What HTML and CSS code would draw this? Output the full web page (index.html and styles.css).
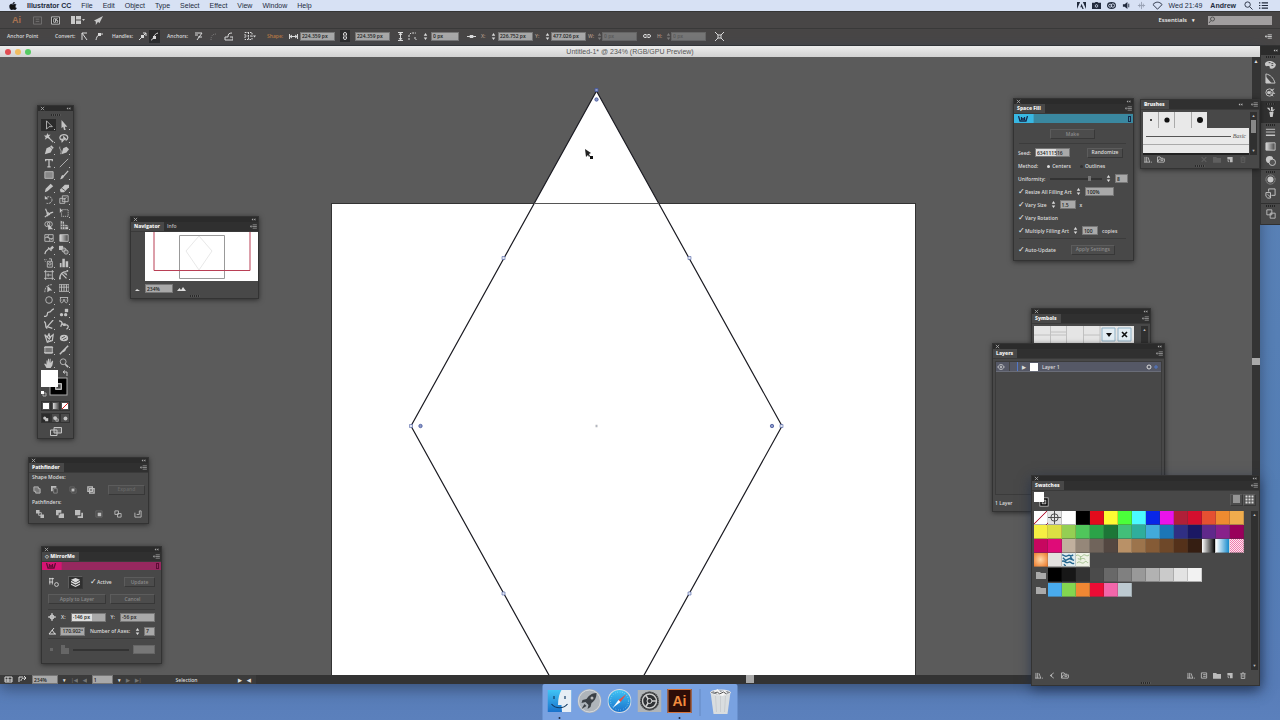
FILE: index.html
```html
<!DOCTYPE html>
<html lang="en">
<head>
<meta charset="utf-8">
<title>Untitled-1* @ 234% (RGB/GPU Preview)</title>
<link rel="stylesheet" href="styles.css">
</head>
<body>
<svg class="defs" aria-hidden="true">
  <symbol id="close" viewBox="0 0 6 6"><path d="M1 1l4 4M5 1L1 5"/></symbol>
  <symbol id="collapse" viewBox="0 0 8 6"><path class="solid" d="M3.500 1v4L1 3zM7 1v4L4.500 3z"/></symbol>
  <symbol id="flyout" viewBox="0 0 8 6"><path d="M3 1h5M3 3h5M3 5h5M0 2.500h2.500L1.200 4z"/></symbol>
  <symbol id="spin" viewBox="0 0 5 8"><path class="solid" d="M.5 3l2-3 2 3zM.5 5l2 3 2-3z"/></symbol>
  <symbol id="link" viewBox="0 0 8 8"><path d="M2.500 3.500V2a1.500 1.500 0 0 1 3 0v1.500M2.500 4.500V6a1.500 1.500 0 0 0 3 0V4.500M4 2.500v3"/></symbol>
  <symbol id="folder" viewBox="0 0 10 8"><path class="solid" d="M0 1h4l1 1h5v6H0z"/></symbol>
  <symbol id="crown" viewBox="0 0 10 6"><path stroke-width="1.300" d="M.5 0L2 5h6L9.500 0M3.500 1v3M6.500 1v3M5 2v2"/></symbol>
  <symbol id="library" viewBox="0 0 9 8"><path d="M1 1v6M3 1v6M4.500 1.500L6.500 7M0 7h7M8 7h1"/></symbol>
  <symbol id="openlib" viewBox="0 0 9 8"><path d="M.5 7V1h3l1 1.500H7M.5 7l2-3.500H9L8 7zM4 5h3"/></symbol>
  <symbol id="newitem" viewBox="0 0 8 8"><path class="solid" d="M1 1h6v6H4V4H1z"/><path d="M1 5.500h1.500V7"/></symbol>
  <symbol id="trashcan" viewBox="0 0 8 8"><path d="M1 2h6M3 1h2M2 2v5.500h4V2M4 3v3"/></symbol>
</svg>

<header class="menubar">
  <svg class="i8" viewBox="0 0 16 16"><path fill="#111" d="M11 0c0 2-1.500 4-3.500 4C7.500 2 9 .5 11 0zM8 5c1 0 2-1 3.500-1 1.300 0 2.500.7 3 1.700-2.800 1.700-2.300 5.300.5 6.300-.8 2-2 4-3.500 4-1.200 0-1.700-.8-3.200-.8S6 16 5 16c-2.600-.3-6-8-2.500-11C4.500 3.300 6 5 8 5z"/></svg>
  <nav class="menus"><b>Illustrator CC</b><span>File</span><span>Edit</span><span>Object</span><span>Type</span><span>Select</span><span>Effect</span><span>View</span><span>Window</span><span>Help</span></nav>
  <div class="menu-extras">
    <svg class="i9" viewBox="0 0 10 10"><path class="solid" d="M0 1h3.500L0 9zM10 1H6.500L10 9zM5 3l2.500 6H6L5.300 7H3.700z"/></svg>
    <svg class="i9" viewBox="0 0 10 10"><path class="solid" d="M0 2h3l1-1h2l1 1h3v7H0z"/><circle cx="5" cy="5.500" r="2.300" fill="#d7e0f2"/><circle cx="5" cy="5.500" r="1" class="solid"/></svg>
    <svg class="i9" viewBox="0 0 10 10"><ellipse cx="5" cy="5" rx="5" ry="3.800" class="solid"/><circle cx="3.500" cy="5.200" r="1.700" stroke="#d7e0f2"/><circle cx="6.500" cy="5" r="1.900" stroke="#d7e0f2"/></svg>
    <svg class="i9" viewBox="0 0 10 10"><path class="solid" d="M1 3.500h2L6 1v8L3 6.500H1z"/><path d="M7.500 3v4"/></svg>
    <svg class="i9 dim" viewBox="0 0 10 10"><path d="M1 5h8M5 1v8M3 3v4M7 3v4"/></svg>
    <svg class="i11" viewBox="0 0 12 10"><path d="M1 4c3-3.500 7-3.500 10 0L6 9z"/></svg>
    <span>Wed 21:49</span><b>Andrew</b>
    <svg class="i9" viewBox="0 0 10 10"><circle cx="4" cy="4" r="3"/><path d="M6.300 6.300L9.500 9.500"/></svg>
    <svg class="i9" viewBox="0 0 10 10"><path stroke-width="1.300" d="M0 2h1.500M3 2h7M0 5h1.500M3 5h7M0 8h1.500M3 8h7"/></svg>
  </div>
</header>

<div class="appbar">
  <span class="ai-mark">Ai</span>
  <button class="flat dim" aria-label="Bridge"><svg class="i9" viewBox="0 0 10 10"><path d="M.5 1h9v8h-9zM3 3.500h4M3 6h4"/></svg></button>
  <button class="flat" aria-label="Stock"><svg class="i9" viewBox="0 0 10 10"><path d="M.5 1h9v8h-9z" fill="#282828"/><path d="M3 3v4M3 3h2v4H3M7.500 3H6v2h1.500v2H6"/></svg></button>
  <button class="flat wide" aria-label="Arrange documents"><svg class="i14" viewBox="0 0 14 10"><path class="solid" d="M0 1h4v8H0zM5 1h5v3.500H5zM5 5.500h5V9H5zM11 4h3l-1.500 2z"/></svg></button>
  <button class="flat" aria-label="GPU performance"><svg class="i9" viewBox="0 0 10 10"><path class="solid" d="M10 0L6 8 4.500 6.500 2 10V6L0 5l4-2z"/></svg></button>
  <div class="workspace"><button class="flat strong">Essentials <span class="mini">▾</span></button><div class="search"><svg class="i8" viewBox="0 0 8 8"><circle cx="4.500" cy="3" r="2"/><path d="M3 4.500L1 7"/></svg><input type="search" aria-label="Search"></div></div>
</div>

<div class="controlbar">
  <div class="controls">
    <span>Anchor Point</span><span>Convert:</span>
    <svg class="i9" viewBox="0 0 9 9"><path d="M2 1l5 7M2 8V1h5"/></svg>
    <svg class="i9" viewBox="0 0 9 9"><path d="M1 8C2 3 4 2 8 2"/><path class="solid" d="M3 1h3v3H3z"/></svg>
    <span>Handles:</span>
    <svg class="i9" viewBox="0 0 9 9"><path d="M1 8L8 1M5 1h3v3"/><path class="solid" d="M3 3h3v3H3z"/></svg>
    <span class="pressed"><svg class="i9" viewBox="0 0 9 9"><path d="M1 8c3 0 2-6 7-7"/><path class="solid" d="M3 4h3v3H3z"/></svg></span>
    <span>Anchors:</span>
    <svg class="i9" viewBox="0 0 9 9"><path d="M1 1h7L3 8M1 3h3M4 5h4"/></svg>
    <svg class="i9 dim" viewBox="0 0 9 9"><path stroke-dasharray="1 1" d="M2 8c0-5 2-6 6-6"/></svg>
    <svg class="i9" viewBox="0 0 9 9"><path d="M1 8V5h3c0-3 1-4 4-4M6 5h3v3H1"/></svg>
    <svg class="i12" viewBox="0 0 12 9"><path stroke-dasharray="1.500 1" d="M1 1h7v7H1zM4.500 1v7M1 4.500h7"/><path class="solid" d="M9 4h3l-1.500 2z"/></svg>
    <span class="orange">Shape:</span>
    <svg class="i9" viewBox="0 0 9 9"><path d="M.5 2v5M8.500 2v5M1 4.500h7M3 3L1 4.500 3 6M6 3l2 1.500L6 6"/></svg>
    <input aria-label="Shape width" value="224.359 px">
    <span class="pressed"><svg class="i8"><use href="#link"/></svg></span>
    <input aria-label="Shape height" value="224.359 px">
    <svg class="i9" viewBox="0 0 9 9"><path d="M2 .5h5M2 8.500h5M4.500 1v7M3 3l1.500-2L6 3M3 6l1.500 2L6 6"/></svg>
    <svg class="i9" viewBox="0 0 9 9"><path stroke-dasharray="2 1" d="M1 8V3l2-2h5M6 6h2v2"/></svg>
    <svg class="sp"><use href="#spin"/></svg>
    <input class="short" aria-label="Corner radius" value="0 px">
    <svg class="i9" viewBox="0 0 9 9"><path d="M0 4.500h9M3 3.500h3v2H3z"/></svg>
    <label for="cx" class="tan">X:</label><svg class="sp"><use href="#spin"/></svg><input id="cx" value="226.752 px">
    <label for="cy" class="tan">Y:</label><svg class="sp"><use href="#spin"/></svg><input id="cy" value="477.026 px">
    <label for="cw" class="tan">W:</label><svg class="sp dim"><use href="#spin"/></svg><input id="cw" disabled value="0 px">
    <svg class="i8 turn"><use href="#link"/></svg>
    <label for="ch" class="tan">H:</label><svg class="sp dim"><use href="#spin"/></svg><input id="ch" disabled value="0 px">
    <svg class="i9" viewBox="0 0 9 9"><path d="M0 0l3 3M9 0L6 3M0 9l3-3M9 9L6 6M3 3h3v3H3z"/></svg>
  </div>
  <svg class="fly"><use href="#flyout"/></svg>
</div>

<main class="work">
  <section class="window">
    <div class="titlebar"><div class="lights"><i></i><i></i><i></i></div><span>Untitled-1* @ 234% (RGB/GPU Preview)</span></div>
    <div class="middle">
      <div class="canvas">
        <svg class="art">
          <rect x="331.500" y="146.500" width="584" height="1200" fill="#fff" stroke="#333"/>
          <path d="M596.500 34L782 369 596.500 704 411 369z" fill="#fff" stroke="#1b1b22" stroke-width="1.200"/>
          <path d="M534 146.500h125" stroke="#555"/>
          <g fill="#dfe3f0" stroke="#5264a8" stroke-width=".6"><path d="M502 199.500h3v3h-3zM688 199.500h3v3h-3zM409.500 367.500h3v3h-3zM780 367.500h3v3h-3zM502 535h3v3h-3zM688 535h3v3h-3z"/></g>
          <g fill="#8d9ac8" stroke="#44559c" stroke-width=".8"><path d="M595 31.500h3v3h-3z"/><circle cx="596.500" cy="42.500" r="1.700"/><circle cx="420.500" cy="369" r="1.700"/><circle cx="772" cy="369" r="1.700"/></g>
          <path d="M595.500 368h2v2h-2z" fill="#8791ac"/>
          <path d="M585 92l1 8 2-2 1 2 1-1-1-2 2-1z" fill="#222" stroke="none"/><path d="M590 99h3v3h-3z" fill="#111" stroke="none"/>
        </svg>
      </div>
      <div class="vscroll"><span>▲</span><i></i></div>
    </div>
    <div class="status">
      <svg class="i9" viewBox="0 0 9 9"><path d="M1 2h7v5H1zM1 5h7M4 2v5"/></svg>
      <svg class="i9" viewBox="0 0 9 9"><path d="M1 7V2h4M3 6c0-2 1-3 5-3M6 1l2 2-2 2"/></svg>
      <input class="zoombox" aria-label="Zoom" value="234%"><span class="mini">▾</span>
      <span class="mini dim">|◀</span><span class="mini dim">◀</span>
      <input class="pagebox" aria-label="Artboard" value="1"><span class="mini">▾</span>
      <span class="mini dim">▶</span><span class="mini dim">▶|</span>
      <span class="mode">Selection</span><span class="mini">▶</span><span class="mini">◀</span>
      <div class="hscroll"><i></i></div>
    </div>
  </section>
  <aside class="side">
    <div class="side-top"><svg class="x6"><use href="#collapse"/></svg></div>
    <div class="side-group">
      <svg class="i11" viewBox="0 0 12 12"><path class="solid" d="M0 5c1-4 9-4 12 1-1 5-5 5-7 4 1-2-1-3-3-2C0 8 0 6 0 5z"/><path d="M4 4h2M7 5h2M7 7h2" stroke="#444"/></svg>
      <svg class="i11" viewBox="0 0 12 12"><path d="M1 1c5 1 8 4 10 10H1z"/><path class="solid" d="M1 4l6 7H1z"/></svg>
      <svg class="i11" viewBox="0 0 12 12"><circle cx="5" cy="6" r="4"/><path d="M4 6l6-4M4 6l7 1M4 6l5 4"/><circle cx="4" cy="6" r="1.700" class="solid"/></svg>
    </div>
    <div class="side-group one on"><svg class="i12" viewBox="0 0 12 12"><path class="solid" d="M4 6h5l-1 6H5zM1 1h3l2 5zM6 0h2v5H6zM11 2L8 6l-1-2z"/></svg></div>
    <div class="side-group">
      <svg class="i11" viewBox="0 0 12 12"><path d="M1 2.500h10M1 5.500h10" /><path stroke-width="1.600" d="M1 9h10"/></svg>
      <svg class="i11" viewBox="0 0 12 12"><path d="M1 2h10v8H1z" fill="url(#fade)"/></svg>
      <svg class="i11" viewBox="0 0 12 12"><circle cx="5" cy="5" r="4" class="solid"/><circle cx="8" cy="8" r="3.500" fill="#555"/></svg>
    </div>
    <div class="side-group two">
      <svg class="i11" viewBox="0 0 12 12"><circle cx="6" cy="6" r="3.300" class="solid"/><circle cx="6" cy="6" r="5" stroke-dasharray="1 1.200"/></svg>
      <svg class="i11" viewBox="0 0 12 12"><path d="M4 4V1h7v7H7M1 5h5v6H3L1 9zM3 7l3 3"/></svg>
    </div>
    <div class="side-group one"><svg class="i12" viewBox="0 0 12 12"><path d="M1 1h6v6H1zM5 5h6v6H5z" fill="#484848"/></svg></div>
  </aside>
</main>

<svg class="defs"><linearGradient id="fade"><stop stop-color="#ddd"/><stop offset="1" stop-color="#444"/></linearGradient>
<linearGradient id="glass" x2="0" y2="1"><stop stop-color="#40c4f5"/><stop offset="1" stop-color="#1972cc"/></linearGradient></svg>

<section class="panel tools" aria-label="Tools">
  <div class="bar"><svg class="x6"><use href="#close"/></svg><svg class="x6"><use href="#collapse"/></svg></div>
  <div class="grip"></div>
  <div class="toolgrid">
    <button class="on" aria-label="Selection"><svg viewBox="0 0 12 12"><path d="M3 1l7 7H6l-3 3z"/></svg></button>
    <button aria-label="Direct selection"><svg viewBox="0 0 12 12"><path class="solid" d="M3 0l7 8H7l1 4H6L5 8l-2 2z"/></svg></button>
    <button aria-label="Magic wand"><svg viewBox="0 0 12 12"><path stroke-width="1.500" d="M5 5l6 6"/><path class="solid" d="M4 0l1 2 3 0-2 2 1 3-3-1-3 2 1-3-2-2h3z"/></svg></button>
    <button aria-label="Lasso"><svg viewBox="0 0 12 12"><path stroke-width="1.500" d="M4 9C-1 7 1 2 6 2s6 5 2 7M3 7c1 0 3 2 0 4"/><path class="solid" d="M5 3l5 5H7l-2 2z"/></svg></button>
    <button aria-label="Pen"><svg viewBox="0 0 12 12"><path class="solid" d="M1 11l2-7 4-2 3 3-2 4z"/><path stroke-width="2" d="M8 1l3 3"/></svg></button>
    <button aria-label="Curvature"><svg viewBox="0 0 12 12"><path class="solid" d="M3 11l2-7 4-2 3 3-3 4z"/><path d="M1 2c-1 4 3 3 1 9"/></svg></button>
    <button aria-label="Type"><svg viewBox="0 0 12 12"><path stroke-width="1.500" d="M2 4V2h8v2M6 2v8M4 10.500h4"/></svg></button>
    <button aria-label="Line"><svg viewBox="0 0 12 12"><path d="M1 11L11 1"/></svg></button>
    <button aria-label="Rectangle"><svg viewBox="0 0 12 12"><path d="M1 2h10v8H1z" fill="#888"/></svg></button>
    <button aria-label="Paintbrush"><svg viewBox="0 0 12 12"><path stroke-width="1.500" d="M11 1L5 8"/><path class="solid" d="M6 7c0 3-2 4-5 4 2-1 1-4 3-5z"/></svg></button>
    <button aria-label="Pencil"><svg viewBox="0 0 12 12"><path class="solid" d="M1 11l1-4 6-6 3 3-7 6z"/></svg></button>
    <button aria-label="Eraser"><svg viewBox="0 0 12 12"><path class="solid" d="M1 8l6-6h5v3l-6 6H2z"/><path stroke="#444" d="M3 6l4 3"/></svg></button>
    <button aria-label="Rotate"><svg viewBox="0 0 12 12"><path stroke-dasharray="3 1" d="M3 3c5-3 8 2 6 5-2 3-6 2-6 2"/><path class="solid" d="M1 1v4h4z"/></svg></button>
    <button aria-label="Scale"><svg viewBox="0 0 12 12"><path d="M4 1h7v7H4zM1 4h6v6H1zM5 6l4-3"/></svg></button>
    <button aria-label="Width"><svg viewBox="0 0 12 12"><path stroke-width="1.500" d="M2 1c0 3 4 4 2 9M1 11c3-3 5-5 10-6M3 5l3 3 3-3"/><circle cx="5" cy="7" r="1.500"/></svg></button>
    <button aria-label="Free transform"><svg viewBox="0 0 12 12"><path stroke-dasharray="1.500 1" d="M4 2h7v8H3V5"/><path class="solid" d="M1 0l4 4H3L1 6z"/></svg></button>
    <button aria-label="Shape builder"><svg viewBox="0 0 12 12"><circle cx="4" cy="5" r="3"/><circle cx="7" cy="5" r="3"/><path class="solid" d="M5 5l6 6H7l-2 1z"/></svg></button>
    <button aria-label="Perspective grid"><svg viewBox="0 0 12 12"><path class="solid" d="M2 1l4 1v3l5 2v4H2z"/><path stroke="#555" d="M4 1v10M7 4v7M2 5h8M2 8h9"/></svg></button>
    <button aria-label="Mesh"><svg viewBox="0 0 12 12"><path d="M1 2h10v8H1zM1 6c4-3 6 3 10 0M6 2c-3 3 3 5 0 8M3 4l2 1M8 8l2-1"/></svg></button>
    <button aria-label="Gradient"><svg viewBox="0 0 12 12"><path d="M1 2h10v8H1z" fill="url(#fade)"/></svg></button>
    <button aria-label="Eyedropper"><svg viewBox="0 0 12 12"><path stroke-width="1.500" d="M1 11l1-3 4-4M5 3l4 4"/><path class="solid" d="M7 4l3-3 2 2-3 3z"/></svg></button>
    <button aria-label="Blend"><svg viewBox="0 0 12 12"><path class="solid" d="M0 1h5v5H0z"/><circle cx="6" cy="6" r="2.500" fill="#777"/><circle cx="8.500" cy="8.500" r="2.500" fill="#666"/></svg></button>
    <button aria-label="Symbol sprayer"><svg viewBox="0 0 12 12"><path d="M4 4h6v7H4zM6 1h3v3"/><path stroke-dasharray="1 1" d="M0 2h4M1 4h2"/><circle cx="7" cy="7" r="1.500"/></svg></button>
    <button aria-label="Graph"><svg viewBox="0 0 12 12"><path class="solid" d="M1 6h2v5H1zM4 1h3v10H4zM8 4h3v7H8z"/></svg></button>
    <button aria-label="Artboard"><svg viewBox="0 0 12 12"><path d="M2 0v12M10 0v12M0 2h12M0 10h12M5 4v4M3 6h6"/></svg></button>
    <button aria-label="Live corners"><svg viewBox="0 0 12 12"><path stroke-width="1.500" d="M1 11c0-6 3-9 8-9M4 5l5 5"/><path class="solid" d="M5 4h4l1 3zM0 9h2v2H0zM9 0h2v2H9z"/></svg></button>
    <button aria-label="Path segment"><svg viewBox="0 0 12 12"><path stroke-dasharray="2 1" d="M1 11c0-6 3-9 9-9"/><path class="solid" d="M4 3l6 6H7l-3 2z"/></svg></button>
    <button aria-label="Grid"><svg viewBox="0 0 12 12"><path d="M0 2h12v8H0zM0 5h12M3 2v8M6 2v8M9 2v8"/></svg></button>
    <button aria-label="Ellipse"><svg viewBox="0 0 12 12"><circle cx="6" cy="6" r="4"/></svg></button>
    <button aria-label="Spiral"><svg viewBox="0 0 12 12"><path d="M1 3h10M2 3c-2 8 3 8 4 2 1 6 6 6 4-2M3 6h1M8 6h1"/></svg></button>
    <button aria-label="Smooth"><svg viewBox="0 0 12 12"><path stroke-width="1.500" d="M0 10h2c4-1 0-5 4-5 3 0 2-3 6-4"/></svg></button>
    <button aria-label="Scatter"><svg viewBox="0 0 12 12"><circle class="solid" cx="3" cy="8" r="2"/><circle class="solid" cx="8" cy="8" r="2"/><path class="solid" d="M7 1h4v4H7z"/></svg></button>
    <button aria-label="Knife"><svg viewBox="0 0 12 12"><path stroke-width="1.500" d="M0 2c4 1 0 7 4 8M11 0L4 8l6 2"/></svg></button>
    <button aria-label="Reshape"><svg viewBox="0 0 12 12"><path stroke-width="1.500" d="M0 1c6 0 2 6 7 5s5 3 2 5M4 3L2 8"/><path class="solid" d="M5 4h3v3H5z"/></svg></button>
    <button aria-label="Crystallize"><svg viewBox="0 0 12 12"><path stroke-width="1.500" d="M1 2l3 9 6-2 1-7-4 3-1-4-2 4zM4 5l4 4M8 5l-3 4"/></svg></button>
    <button aria-label="Warp"><svg viewBox="0 0 12 12"><ellipse class="solid" cx="6" cy="6" rx="5" ry="4"/><path stroke="#444" d="M3 6l4-2M5 8l4-2"/></svg></button>
    <button aria-label="Slice"><svg viewBox="0 0 12 12"><path d="M1 2h9v8H1z" fill="#777"/><path d="M0 3h11M0 9h11"/></svg></button>
    <button aria-label="Slice select"><svg viewBox="0 0 12 12"><path stroke-width="1.800" d="M1 11l4-4 6-6M5 8l3-3"/></svg></button>
    <button aria-label="Hand"><svg viewBox="0 0 12 12"><path class="solid" d="M3 12L0 7h2l1 1V3h1v3l1-5h1v5l1-5h1v5l2-3 1 1-1 5-2 3z"/></svg></button>
    <button aria-label="Zoom"><svg viewBox="0 0 12 12"><circle cx="5" cy="4.500" r="3.500"/><path stroke-width="2" d="M7.500 7.500L11 11"/></svg></button>
  </div>
  <svg class="fillstroke" viewBox="0 0 30 31">
    <path d="M12 12h11v11H12z" stroke="#aaa" stroke-width="7"/><path d="M12 12h11v11H12z" stroke="#000" stroke-width="5"/>
    <path d="M14.500 14.500h6v6h-6z" stroke="#bbb"/><path d="M0 1h17v17H0z" fill="#fff" stroke="none"/>
    <path d="M22 3h4v4M22 3l2-1.500M22 3l2 1.500"/><path d="M2 24h3v3H2z" stroke="#aaa"/><path d="M0 22h3v3H0z" fill="#fff" stroke="none"/>
  </svg>
  <div class="modes"><button aria-label="Color"><i class="white"></i></button><button aria-label="Gradient fill"><i class="ramp"></i></button><button aria-label="None"><i class="none"></i></button></div>
  <div class="modes"><button class="on" aria-label="Draw normal"><svg viewBox="0 0 9 9"><circle class="solid" cx="3.500" cy="4" r="2"/><path class="solid" d="M4 4h4v4H4z"/></svg></button><button aria-label="Draw behind"><svg viewBox="0 0 9 9"><circle class="solid" cx="4" cy="4" r="2.500"/><path d="M5 5h3v3H5z"/></svg></button><button aria-label="Draw inside"><svg viewBox="0 0 9 9"><circle cx="4.500" cy="4.500" r="2.500" class="solid"/></svg></button></div>
  <svg class="screenmode" viewBox="0 0 12 9"><path d="M4 .5h7.500V6H4z" fill="#666"/><path d="M.5 3H7v5.500H.5z"/></svg>
</section>

<section class="panel navigator" aria-label="Navigator">
  <div class="bar"><svg class="x6"><use href="#close"/></svg><svg class="x6"><use href="#collapse"/></svg></div>
  <div class="tabs"><b class="tab">Navigator</b><span class="tab off">Info</span><svg class="fly"><use href="#flyout"/></svg></div>
  <svg class="preview" viewBox="0 0 113 49"><path d="M0 0h113v49H0z" fill="#fff" stroke="none"/><path d="M34.500 3.500h45v43h-45z" stroke="#999"/><path d="M54 4l13 15-13 19-13-19z" stroke="#e8e8e8"/><path d="M9 0v38.500h96V0" stroke="#b93f55"/></svg>
  <div class="navfoot"><svg class="i9" viewBox="0 0 9 9"><path class="solid" d="M2 7l2-2 3 2z"/></svg><input aria-label="Navigator zoom" value="234%"><svg class="i9" viewBox="0 0 9 9"><path class="solid" d="M0 7l2.500-3L4 6l2-3 3 4z"/></svg></div>
  <div class="grip"></div>
</section>

<section class="panel pathfinder" aria-label="Pathfinder">
  <div class="bar"><svg class="x6"><use href="#close"/></svg><svg class="x6"><use href="#collapse"/></svg></div>
  <div class="tabs"><b class="tab">Pathfinder</b><svg class="fly"><use href="#flyout"/></svg></div>
  <div class="pf">
    <span>Shape Modes:</span>
    <div class="pfrow">
      <svg class="i9" viewBox="0 0 9 9"><path d="M1 1h5v2h2v5H3V6H1z" fill="#777"/></svg>
      <svg class="i9" viewBox="0 0 9 9"><path class="solid" d="M0 0h6v2H2v4H0z"/><path stroke="#888" d="M3 3h4v5H3z"/></svg>
      <svg class="i9" viewBox="0 0 9 9"><path stroke="#666" d="M1 1h5v5H1zM3 3h5v5H3z"/><path class="solid" d="M3 3h3v3H3z"/></svg>
      <svg class="i9" viewBox="0 0 9 9"><path stroke-width="1.500" d="M1 1h5v5H1zM3 3h5v5H3z"/></svg>
      <button disabled>Expand</button>
    </div>
    <span>Pathfinders:</span>
    <div class="pfrow six">
      <svg class="i9" viewBox="0 0 9 9"><path class="solid" d="M0 0h4v4H0zM5 5h4v4H5z"/><path d="M3 3h3v3H3z"/></svg>
      <svg class="i9" viewBox="0 0 9 9"><path class="solid" d="M0 0h6v3H3v3H0z"/><path class="solid" d="M4 4h5v5H3V6h1z"/></svg>
      <svg class="i9" viewBox="0 0 9 9"><path class="solid" d="M0 0h6v6H0zM7 3h2v6H3V7h4z"/></svg>
      <svg class="i9" viewBox="0 0 9 9"><path stroke="#666" d="M1 1h7v7H1z"/><path class="solid" d="M3 3h4v4H3z"/></svg>
      <svg class="i9" viewBox="0 0 9 9"><path d="M1 1h4v4H1zM4 4h4v4H4z"/></svg>
      <svg class="i9" viewBox="0 0 9 9"><path d="M1 3v5h7V1H6v4H3"/></svg>
    </div>
  </div>
</section>

<section class="panel mirror" aria-label="MirrorMe">
  <div class="bar"><svg class="x6"><use href="#close"/></svg><svg class="x6"><use href="#collapse"/></svg></div>
  <div class="tabs"><b class="tab">◇ MirrorMe</b><svg class="fly"><use href="#flyout"/></svg></div>
  <div class="brand pink"><svg class="crown"><use href="#crown"/></svg><i></i></div>
  <div class="mm">
    <div class="row tall"><svg class="i12" viewBox="0 0 12 12"><path d="M1 1v8M4 1v8M0 2h6M0 6h5"/><circle cx="9" cy="9" r="2.300"/></svg>
      <button class="layerbtn" aria-label="Target layer"><svg class="i9" viewBox="0 0 10 10"><path class="solid" d="M5 0l5 2-5 3-5-3zM0 3l5 2.500L10 3v1.800L5 7.500 0 4.800zM0 6l5 2.500L10 6v1.500L5 10 0 7.500z"/></svg></button>
      <label><input type="checkbox" checked>Active</label><button class="push" disabled>Update</button></div>
    <div class="row pair"><button disabled>Apply to Layer</button><button disabled>Cancel</button></div>
    <hr>
    <div class="row coords"><svg class="i8" viewBox="0 0 8 8"><circle cx="4" cy="4" r="2"/><path d="M4 0v8M0 4h8"/></svg><label for="mx">X:</label><input id="mx" class="w35 hot" value="-146 px"><label for="my">Y:</label><input id="my" class="w35" value="-56 px"></div>
    <div class="row coords"><svg class="i8" viewBox="0 0 8 8"><path d="M6 1L1 7h7M4 3l3 4"/></svg><input aria-label="Angle" class="w25" value="170.902°"><label for="axes">Number of Axes:</label><svg class="sp"><use href="#spin"/></svg><input id="axes" class="w11" value="7"></div>
    <hr>
    <div class="row coords"><svg class="i8 faint" viewBox="0 0 8 8"><path class="solid" d="M2 2h3v3H2z"/></svg><svg class="i9 faint" viewBox="0 0 9 9"><path class="solid" d="M1 0h4v3h4v6H1z"/></svg><input type="range" disabled class="grow unset" value="0" aria-label="Blend amount"><input disabled class="w22" aria-label="Blend value" value=""></div>
  </div>
</section>

<section class="panel spacefill" aria-label="Space Fill">
  <div class="bar"><svg class="x6"><use href="#close"/></svg><svg class="x6"><use href="#collapse"/></svg></div>
  <div class="tabs"><b class="tab">Space Fill</b><svg class="fly"><use href="#flyout"/></svg></div>
  <div class="brand cyan"><svg class="crown"><use href="#crown"/></svg><i></i></div>
  <div class="sf">
    <div class="row make"><button disabled>Make</button></div>
    <hr>
    <div class="row"><label for="seed">Seed:</label><input id="seed" class="w35 hot" value="634111516"><button class="push">Randomize</button></div>
    <div class="row method"><span>Method:</span><label><input type="radio" name="m" checked>Centers</label><label><input type="radio" name="m">Outlines</label></div>
    <div class="row"><label for="uni">Uniformity:</label><input id="uni" type="range" class="grow" value="78"><svg class="sp"><use href="#spin"/></svg><input aria-label="Uniformity value" class="w13" value="8"></div>
    <div class="row"><label><input type="checkbox" checked>Resize All Filling Art</label><svg class="sp"><use href="#spin"/></svg><input aria-label="Resize percent" class="w29" value="100%"></div>
    <div class="row"><label><input type="checkbox" checked>Vary Size</label><svg class="sp"><use href="#spin"/></svg><input aria-label="Size variation" class="w17" value="1.5"><span>x</span></div>
    <div class="row"><label><input type="checkbox" checked>Vary Rotation</label></div>
    <div class="row"><label><input type="checkbox" checked>Multiply Filling Art</label><svg class="sp"><use href="#spin"/></svg><input aria-label="Copies" class="w17" value="100"><span>copies</span></div>
    <hr>
    <div class="row auto"><label><input type="checkbox" checked>Auto-Update</label><button disabled>Apply Settings</button></div>
  </div>
</section>

<section class="panel brushes" aria-label="Brushes">
  <div class="tabs"><b class="tab">Brushes</b><svg class="x6 far"><use href="#collapse"/></svg><svg class="fly near"><use href="#flyout"/></svg></div>
  <div class="brushbody">
    <div class="brushlist">
      <svg class="tips" viewBox="0 0 64 16"><path fill="#e9e9e9" stroke="none" d="M0 0h64v16H0z"/><path stroke="#aaa" d="M15.500 0v16M31.500 0v16M48.500 0v16"/><g fill="#111" stroke="none"><circle cx="8" cy="8" r="1"/><circle cx="24" cy="8" r="2.600"/><circle cx="57" cy="8" r="3"/></g></svg>
      <div class="basic"><i></i><span>Basic</span></div>
      <div class="rough"></div>
    </div>
    <div class="scroller"><span>▲</span><i></i><span>▼</span></div>
  </div>
  <div class="foot"><svg><use href="#library"/></svg><svg><use href="#openlib"/></svg><span></span><svg class="faint"><use href="#close"/></svg><svg class="faint"><use href="#folder"/></svg><svg><use href="#newitem"/></svg><svg class="faint"><use href="#trashcan"/></svg></div>
  <div class="grip"></div>
</section>

<section class="panel symbols" aria-label="Symbols">
  <div class="bar"><svg class="x6"><use href="#close"/></svg><svg class="x6"><use href="#collapse"/></svg></div>
  <div class="tabs"><b class="tab">Symbols</b><svg class="fly"><use href="#flyout"/></svg></div>
  <div class="symrow"><svg viewBox="0 0 100 17"><path fill="#e5e5e5" stroke="none" d="M0 0h100v17H0z"/><path stroke="#c0c0c0" d="M16.500 0v17M32.500 0v17M49.500 0v17M66 0v17M0 9h16M17 6h15M17 9h15M50 9h16"/><path fill="#e3edf3" stroke="#8fb1c6" d="M68 2h13v13H68zM84 2h13v13H84z"/><path fill="#111" stroke="none" d="M72 7h6l-3 4z"/><path stroke="#111" stroke-width="1.600" d="M88 6l5 5M93 6l-5 5"/></svg><div class="scroller"><span>▲</span></div></div>
</section>

<section class="panel layers" aria-label="Layers">
  <div class="bar"><svg class="x6"><use href="#close"/></svg><svg class="x6"><use href="#collapse"/></svg></div>
  <div class="tabs"><b class="tab">Layers</b><svg class="fly"><use href="#flyout"/></svg></div>
  <div class="layerlist"><div class="layer"><svg class="i8" viewBox="0 0 10 8"><path d="M1 4c2-4 6-4 8 0-2 4-6 4-8 0z"/><circle cx="5" cy="4" r="1"/></svg><i class="lock"></i><span class="mini">▶</span><i class="thumb"></i><span>Layer 1</span><svg class="target" viewBox="0 0 14 8"><circle cx="3" cy="4" r="2"/><path stroke="#5278c8" d="M9 3h2v2H9z"/></svg></div></div>
  <div class="layerfoot">1 Layer</div>
</section>

<section class="panel swatches" aria-label="Swatches">
  <div class="bar"><svg class="x6"><use href="#close"/></svg><svg class="x6"><use href="#collapse"/></svg></div>
  <div class="tabs"><b class="tab">Swatches</b><svg class="fly"><use href="#flyout"/></svg></div>
  <div class="swhead"><svg class="swfs" viewBox="0 0 15 15"><path d="M7 7h6v6H7z" stroke="#ccc" stroke-width="3"/><path d="M7 7h6v6H7z" stroke="#000" stroke-width="1.500"/><path d="M0 0h10v10H0z" fill="#fff" stroke="none"/></svg>
    <div class="views"><button aria-label="List view"><svg class="i9" viewBox="0 0 9 9"><path d="M1 1h7M1 3h7M1 5h7M1 7h7"/></svg></button><button aria-label="Grid view"><svg class="i9" viewBox="0 0 9 9"><path stroke-width="2" stroke-dasharray="2 1" d="M.5 1.500h8M.5 4.500h8M.5 7.500h8"/></svg></button></div></div>
  <div class="swbody"><div class="swlist"><div class="swgrid" id="colors"></div><div class="swgrid group" id="grays"><svg class="fold"><use href="#folder"/></svg></div><div class="swgrid group" id="brights"><svg class="fold"><use href="#folder"/></svg></div></div><div class="scroller"><span>▲</span><b></b><span>▼</span></div></div>
  <div class="foot"><svg><use href="#library"/></svg><svg viewBox="0 0 8 8"><path d="M6 1L2 4l4 3M2 4h2"/></svg><svg><use href="#openlib"/></svg><span></span><svg><use href="#library"/></svg><svg viewBox="0 0 8 8"><path d="M1 1h6v6H1zM3 3h3M3 5h3"/></svg><svg><use href="#folder"/></svg><svg><use href="#newitem"/></svg><svg><use href="#trashcan"/></svg></div>
  <div class="grip"></div>
</section>

<footer class="dock">
  <div class="app running"><svg viewBox="0 0 24 24"><path fill="url(#glass)" stroke="none" d="M0 1h24v22H0z"/><path fill="#e6eef5" stroke="none" d="M14 1h10v22H14.500l-.5-7h-3.500C10.500 9 12 4 14 1z"/><path stroke="#123c66" stroke-width="1.200" d="M4 15c4 5 12 5 16 0M6.500 7v3M17.500 7v3"/></svg></div>
  <div class="app"><svg viewBox="0 0 24 24"><circle cx="12" cy="12" r="12" fill="#aeb4ba" stroke="none"/><circle cx="12" cy="12" r="11" stroke="#d5d9dd"/><path fill="#3b4046" stroke="none" d="M19 4c-5 0-8 3-10 6l-4 1-1 3 4-1 3 3-1 4 3-2 1-4c3-2 5-5 5-10zM7 15l-3 5 5-3z"/><circle cx="14.500" cy="9" r="1.500" fill="#bbb" stroke="none"/></svg></div>
  <div class="app"><svg viewBox="0 0 24 24"><circle cx="12" cy="12" r="12" fill="#d7dde3" stroke="none"/><circle cx="12" cy="12" r="11" fill="url(#glass)" stroke="none"/><path fill="#e94f43" stroke="none" d="M19 5l-6 8-2-2z"/><path fill="#fff" stroke="none" d="M5 19l6-8 2 2z"/><circle cx="12" cy="12" r="9" stroke="#bde5fb" stroke-dasharray=".5 2"/></svg></div>
  <div class="app"><svg viewBox="0 0 24 24"><path fill="#b0b4b7" stroke="none" d="M0 1h24v22H0z"/><circle cx="12" cy="12" r="9.500" fill="#303235" stroke="none"/><circle cx="12" cy="12" r="7" stroke="#ccc" stroke-width="1.500"/><circle cx="12" cy="12" r="9" stroke="#888" stroke-dasharray="1 1"/><path stroke="#ccc" stroke-width="1.500" d="M12 12h7M12 12L8 6M12 12l-4 6"/><circle cx="12" cy="12" r="2.500" fill="#303235" stroke="#ddd"/></svg></div>
  <div class="app running"><span class="aiapp">Ai</span></div>
  <hr>
  <div class="app"><svg class="bin" viewBox="0 0 24 26"><path fill="#d9dddf" stroke="none" d="M2 3h20l-3 22H5z"/><ellipse cx="12" cy="3.500" rx="10" ry="2.500" fill="#8c9196" stroke="#eee"/><path fill="#f5f5f5" stroke="none" d="M5 3l4-3 3 3 4-2 3 3-5 3-5-2z"/><path stroke="#555" d="M6 4l3-1 2 2 4-2 3 2"/><path stroke="#c9cdd0" d="M7 7l1 16M12 7v16M17 7l-1 16"/></svg></div>
</footer>
<script src="app.js"></script>
</body>
</html>
```
FILE: app.js
```js
const palette = {
  colors: [
    "linear-gradient(135deg,#fff 46%,#b5203a 47% 53%,#fff 54%)", "registration", "#fff", "#000", "#e30b1c", "#fdfb33", "#4bff3a", "#4bfaff", "#0826e8", "#ea13ea", "#b11f38", "#d40f2e", "#e55032", "#ee8b30", "#efac4d",
    "#f6ee43", "#dcdf43", "#94cf53", "#50c65b", "#2ba348", "#1c7637", "#42bf79", "#2fae9c", "#42aadb", "#1b76b6", "#302f83", "#1b1863", "#60298b", "#88218a", "#99005b",
    "#c7075f", "#df0b78", "#c1b09e", "#958779", "#70645b", "#534741", "#b99167", "#9c744c", "#855b36", "#6e4829", "#54311a", "#351e12",
    "linear-gradient(90deg,#fff,#000)", "linear-gradient(90deg,#fff,#168bcc)", "repeating-conic-gradient(#ef7aac 0 25%,#fde6ef 0 50%) 0 0/2px 2px",
    "radial-gradient(#ffd8a8,#ed7b2c)", "#e3e1df", "pattern-blue", "pattern-green"
  ],
  grays: ["#000", "#171717", "#333", "#4b4b4b", "#686868", "#808080", "#999", "#b2b2b2", "#cacaca", "#e3e3e3", "#f2f2f2"],
  brights: ["#49abed", "#83d650", "#f08733", "#ed0c35", "#f266aa", "#bdcad1"]
};

const art = {
  "registration": '<circle cx="7" cy="7" r="4"/><path d="M7 0v14M0 7h14"/>',
  "pattern-blue": '<path stroke-width="1.500" d="M0 2c3 0 3 3 6 1s3 2 6-1M1 5l3 3 4-2 5 2M0 9c3-2 4 3 7 1s3 3 6 1M2 12l2 2M9 4l2 3"/>',
  "pattern-green": '<path d="M0 3c3-3 4 3 7 0s4 2 7-1M2 6c3 2 5-2 8 1M1 11c3-4 5 2 8-1s3 2 4 0M5 4v4"/>'
};

for (const [id, list] of Object.entries(palette)) {
  const host = document.getElementById(id);
  for (const value of list) {
    const cell = document.createElement("i");
    if (art[value]) {
      cell.innerHTML = `<svg viewBox="0 0 14 14">${art[value]}</svg>`;
      cell.className = value;
    } else {
      cell.style.background = value;
    }
    host.append(cell);
  }
}
```
FILE: styles.css
```css
* { box-sizing: border-box; }
body {
  margin: 0; height: 100vh; padding-bottom: 36px; overflow: hidden; position: relative;
  display: flex; flex-direction: column;
  font: 600 5px/8px "Open Sans", "Noto Sans", sans-serif; color: #dcdcdc;
  background: linear-gradient(#5d84b8 0, #547eb5 70%, #587db8 95%, #5b80bc);
}
svg { fill: none; stroke: currentColor; stroke-width: 1; display: block; flex: none; }
.solid { fill: currentColor; stroke: none; }
.defs { position: absolute; width: 0; height: 0; }
.i8 { width: 8px; height: 8px; } .i9 { width: 9px; height: 9px; } .i11 { width: 11px; height: 11px; }
.i12 { width: 12px; height: 10px; } .i14 { width: 14px; height: 10px; }
.x6 { width: 5px; height: 5px; } .sp { width: 5px; height: 7px; } .fly { width: 7px; height: 5px; }
.dim { opacity: .35; } .faint { opacity: .2; }
.mini { font-size: 5px; line-height: 8px; }
.turn { transform: rotate(90deg); }
button { font: inherit; color: inherit; background: #4c4c4c; border: 1px solid #5c5c5c; border-color: #5c5c5c #383838 #383838 #5c5c5c; padding: 0 3px; height: 10px; line-height: 7px; }
button:disabled { color: #8a8a8a; }
input { font: inherit; line-height: 6px; height: 9px; min-width: 0; padding: 0 1px; margin: 0; border: 1px solid #777; background: #a9a9a9; color: #222; border-radius: 0; }
input:disabled { background: #777; border-color: #666; color: #5a5a5a; }
input.hot { background: linear-gradient(90deg, #dedede 60%, #a9a9a9 60%); }
input[type=checkbox], input[type=radio] { appearance: none; border: 0; background: none; color: #eee; width: 8px; height: 8px; }
input[type=checkbox]:checked::before { content: "✓"; display: block; font: 8px/7px "DejaVu Sans", sans-serif; }
input[type=radio]::before { content: ""; display: block; width: 3px; height: 3px; margin: 3px 2px; border-radius: 50%; background: #333; }
input[type=radio]:checked::before { background: #ddd; }
input[type=range] { appearance: none; background: linear-gradient(#333, #333) center / 100% 2px no-repeat; border: 0; height: 8px; padding: 0; }
input[type=range]::-webkit-slider-thumb { appearance: none; width: 3px; height: 5px; background: #777; }
input.unset::-webkit-slider-thumb { background: none; }
label { display: flex; align-items: center; white-space: nowrap; }
hr { border: 0; border-top: 1px solid #3c3c3c; margin: 0; }

.menubar { height: 11px; flex: none; background: #d7e1f4; color: #222b3d; display: flex; align-items: center; gap: 10px; padding: 0 12px 0 9px; font: 7px/11px "Liberation Sans", Arial, sans-serif; }
.menus { display: flex; gap: 10px; }
.menu-extras { margin-left: auto; display: flex; align-items: center; gap: 6px; }
.menu-extras b { margin: 0 2px; }

.appbar { height: 18px; flex: none; background: #484646; border-top: 1px solid #353535; border-bottom: 1px solid #393939; display: flex; align-items: center; gap: 9px; padding: 0 8px 0 12px; }
.ai-mark { font: 700 9px/12px "Liberation Sans", Arial, sans-serif; color: #a97351; width: 12px; }
.flat { background: none; border: 0; padding: 0; height: 12px; display: flex; align-items: center; color: #c9c9c9; }
.flat.wide { margin-left: 2px; }
.workspace { margin-left: auto; display: flex; align-items: center; gap: 13px; }
.strong { font-size: 6px; gap: 5px; color: #eee; }
.search { display: flex; align-items: center; width: 64px; background: #a19e9f; color: #555; }
.search input { flex: 1; border: 0; background: none; }

.controlbar { height: 17px; flex: none; background: #484646; border-bottom: 1px solid #333; display: flex; align-items: center; padding: 0 8px 2px 7px; }
.controls { display: grid; align-items: center; justify-items: start; white-space: nowrap; grid-template-columns: 48px 25px 15px 17px 26px 11px 18px 27px 15px 15px 20px 23px 22px 11px 40px 15px 41px 12px 15px 8px 36px 14px 10px 7px 37px 10px 6px 37px 9px 5px 41px 14px 9px 5px 44px 10px; }
.controls input { width: 100%; max-width: 35px; }
.controls .short { max-width: 28px; }
.pressed { background: #2c2c2c; padding: 2px 1px; }
.orange { color: #b87a45; } .tan { color: #b39a88; }
.controlbar > .fly { margin-left: auto; }

.work { flex: 1; min-height: 0; display: flex; }
.window { flex: 1; min-width: 0; display: flex; flex-direction: column; box-shadow: 0 5px 14px #2a3c5aaa; }
.titlebar { height: 11px; background: linear-gradient(#ececec, #d2d2d2); color: #555; display: grid; grid-template-columns: 1fr auto 1fr; align-items: center; font: 7px/11px "Liberation Sans", Arial, sans-serif; }
.lights { display: flex; gap: 4px; padding-left: 5px; }
.lights i { width: 6px; height: 6px; border-radius: 50%; background: #e04b50; }
.lights i + i { background: #f1bd61; } .lights i + i + i { background: #55ca62; }
.middle { flex: 1; min-height: 0; display: flex; }
.canvas { flex: 1; background: #5b5b5b; min-width: 0; overflow: hidden; }
.art { width: 100%; height: 100%; }
.vscroll { width: 8px; background: #343434; display: flex; flex-direction: column; align-items: center; justify-content: space-between; font-size: 5px; }
.vscroll i { width: 8px; height: 7px; background: #aaa; margin-bottom: 310px; }
.status { height: 9px; flex: none; background: #3b3b3b; display: flex; align-items: center; gap: 5px; padding: 0 8px 0 4px; }
.zoombox { width: 26px; } .pagebox { width: 21px; }
.mode { margin: 0 35px 0 29px; }
.hscroll { flex: 1; align-self: stretch; background: #333; display: flex; justify-content: center; padding-right: 8px; }
.hscroll i { width: 8px; height: 8px; background: #aaa; }

.side { width: 20px; align-self: flex-start; background: #484848; color: #c8c8c8; border-left: 1px solid #333; }
.side-top { height: 9px; background: #2c2c2c; display: flex; justify-content: flex-end; padding: 2px; }
.side-group { height: 47px; border-bottom: 1px solid #303030; display: flex; flex-direction: column; align-items: center; gap: 3px; padding-top: 1px; }
.side-group::before { content: ""; width: 9px; height: 2px; margin-bottom: -2px; background: repeating-linear-gradient(90deg, #252525 0 1px, #484848 1px 2px); }
.side-group.one { height: 21px; gap: 4px; } .side-group.two { height: 34px; }
.side-group.on { background: #303030; }

.panel { position: absolute; background: #484848; border: 1px solid #333; box-shadow: 0 1px 5px #0008; display: flex; flex-direction: column; }
.bar { height: 5px; flex: none; background: #2b2b2b; color: #aaa; display: flex; justify-content: space-between; align-items: center; padding: 0 2px; }
.tabs { height: 10px; flex: none; background: #303030; display: flex; align-items: center; padding-right: 1px; border-bottom: 1px solid #3a3a3a; }
.tab { background: #484848; height: 9px; padding: 0 4px 0 3px; line-height: 9px; color: #eee; }
.tab.off { background: none; color: #bbb; }
.tabs .fly { margin-left: auto; color: #999; }
.tabs .far { margin-left: auto; color: #bbb; } .tabs .fly.near { margin-left: 8px; }
.grip { width: 10px; height: 2px; flex: none; margin: 1px auto; background: repeating-linear-gradient(90deg, #2a2a2a 0 1px, #555 1px 2px); }
.row { display: flex; align-items: center; gap: 4px; height: 13px; }
.grow { flex: 1; }
.w11 { width: 11px; } .w13 { width: 13px; } .w17 { width: 16px; } .w22 { width: 22px; } .w25 { width: 25px; } .w29 { width: 29px; } .w35 { width: 35px; }
.brand { height: 9px; padding: 1px 2px 1px 4px; display: flex; justify-content: space-between; align-items: center; }
.brand i { width: 3px; height: 6px; border: 1px solid; }
.crown { width: 10px; height: 6px; }
.pink { color: #5e0b35; background: linear-gradient(90deg, #d51472 16%, #96285f 17%); }
.cyan { color: #14284a; background: linear-gradient(90deg, #38b7e3 16%, #3a88a0 17%); }

.tools { left: 37px; top: 105px; width: 37px; padding-bottom: 2px; color: #c4c4c4; }
.tools .grip { margin: 3px auto 3px; }
.toolgrid { height: 250px; display: grid; grid-template: repeat(20, 1fr) / 15px 15px; padding-left: 3px; }
.toolgrid button { border: 0; background: none; padding: 0; height: 12px; display: grid; place-items: center; position: relative; }
.toolgrid button::after { content: ""; position: absolute; right: 1px; bottom: 1px; width: 1px; height: 1px; background: #bbb; }
.toolgrid button.on, .modes .on { background: #2b2b2b; }
.toolgrid svg { width: 10px; height: 10px; }
.fillstroke { width: 30px; height: 31px; margin-left: 3px; }
.modes { display: flex; height: 10px; margin: 1px 3px; }
.modes button { flex: 1; padding: 0; border: 1px solid #333; height: 10px; display: grid; place-items: center; }
.modes i { width: 6px; height: 6px; } .modes svg { width: 7px; height: 7px; }
.white { background: #fff; } .ramp { background: linear-gradient(90deg, #ddd, #444); } .none { background: linear-gradient(135deg, #fff 42%, #d22 43% 57%, #fff 58%); }
.screenmode { width: 12px; height: 9px; margin: 3px auto 0; }

.navigator { left: 130px; top: 216px; width: 129px; }
.preview { margin-left: 14px; height: 49px; }
.navfoot { height: 13px; display: flex; align-items: center; gap: 3px; padding: 2px 0 0 2px; }
.navfoot input { width: 28px; margin-right: 1px; }

.pathfinder { left: 28px; top: 457px; width: 121px; height: 67px; }
.pf { padding: 0 3px; display: flex; flex-direction: column; }
.pfrow { height: 17px; display: flex; align-items: center; gap: 10px; padding-left: 1px; color: #bcbcbc; }
.pfrow svg { width: 8px; height: 8px; }
.pfrow button { width: 37px; margin-left: auto; color: #666; }
.pfrow.six { justify-content: space-between; padding: 0 3px 0 4px; height: 16px; }

.mirror { left: 41px; top: 546px; width: 121px; height: 118px; }
.mm { padding: 5px 6px; display: flex; flex-direction: column; }
.mm .tall { height: 14px; gap: 8px; }
.layerbtn { background: #303030; height: 13px; width: 15px; padding: 0; display: grid; place-items: center; }
.tall label { margin-left: -2px; }
.mm .push { width: 31px; margin-left: auto; }
.pair { height: 20px; } .pair button:first-child { width: 58px; } .pair button:last-child { flex: 1; }
.coords { height: 14px; justify-content: space-between; }
.mm hr:last-of-type + .coords { height: 21px; }

.spacefill { right: 146px; top: 98px; width: 121px; height: 163px; }
.sf { padding: 3px 5px 0 3px; }
.sf .make { height: 16px; justify-content: center; } .make button { width: 45px; }
.sf hr { margin: 1px 2px 2px; }
.sf hr + .auto { height: 17px; }
.sf .push { margin-left: auto; width: 36px; padding: 0; margin-right: 5px; }
.sf .row > label:first-child:not(:has(input)), .method > span { padding-left: 1px; }
.sf .auto { gap: 15px; } .auto button { width: 44px; padding: 0; }
.method { gap: 6px; }

.brushes { right: 20px; top: 99px; width: 120px; }
.brushbody { height: 43px; margin: 2px 2px 0; display: flex; gap: 1px; }
.brushlist { flex: 1; display: flex; flex-direction: column; }
.tips { width: 64px; height: 16px; }
.basic { height: 17px; background: #e9e9e9; color: #555; display: flex; align-items: center; gap: 2px; padding: 0 3px; border-bottom: 1px solid #aaa; }
.basic i { flex: 1; height: 1px; background: #555; }
.basic span { font: italic 6px/8px "Liberation Serif", serif; }
.rough { height: 10px; background: #e9e9e9; border-bottom: 2px solid #222; }
.scroller { width: 7px; background: #303030; display: flex; flex-direction: column; justify-content: space-between; align-items: center; color: #bbb; font-size: 4px; }
.scroller i { width: 5px; height: 13px; background: #888; margin-bottom: 14px; }
.foot { height: 11px; display: flex; align-items: center; gap: 5px; padding: 0 12px 0 3px; color: #bbb; }
.brushes .foot { height: 9px; }
.foot svg { width: 8px; height: 7px; } .foot span { flex: 1; }

.symbols { right: 129px; top: 308px; width: 120px; height: 50px; }
.symrow { display: flex; justify-content: space-between; margin: 2px 2px 0; height: 34px; }
.symrow svg { width: 100px; height: 17px; }
.layers { right: 115px; top: 343px; width: 173px; height: 169px; }
.layerlist { flex: 1; margin: 2px 2px 0; border: 1px solid #3b3b3b; }
.layer { height: 10px; background: #555866; display: flex; align-items: center; gap: 4px; padding: 0 1px; border-bottom: 1px solid #6a6d78; }
.lock { width: 9px; height: 9px; border-left: 1px solid #444; border-right: 1px solid #5278c8; }
.thumb { width: 8px; height: 8px; background: #fff; }
.target { width: 14px; height: 8px; margin-left: auto; }
.layerfoot { height: 16px; padding: 4px 2px; }

.swatches { right: 20px; top: 475px; width: 229px; height: 211px; box-shadow: 0 4px 12px #1a2a4aaa; }
.swhead { height: 20px; display: flex; justify-content: space-between; align-items: center; padding: 0 3px 3px 2px; }
.swfs { width: 15px; height: 15px; }
.views { display: flex; } .views button { height: 12px; width: 13px; padding: 0; display: grid; place-items: center; }
.swbody { flex: 1; display: flex; justify-content: space-between; padding: 0 1px 0 2px; }
.swlist { display: flex; flex-direction: column; gap: 1px; }
.swgrid { display: grid; grid-template-columns: repeat(15, 14px); grid-auto-rows: 14px; }
.swgrid i { border-right: 1px solid #3333; border-bottom: 1px solid #4446; }
.swgrid i svg { width: 13px; height: 13px; }
.registration { background: #e4e4e4; color: #444; }
.pattern-blue { background: #dfecef; color: #23658d; }
.pattern-green { background: #eef1e4; color: #9bbb86; }
.fold { width: 10px; height: 8px; align-self: center; justify-self: center; color: #aaa; }

.dock { position: absolute; left: 50%; bottom: 0; transform: translateX(-50%); height: 36px; background: #79a2e1; border-radius: 2px 2px 0 0; display: flex; align-items: flex-start; gap: 6px; padding: 5px 5px 0; }
.app { display: flex; flex-direction: column; align-items: center; gap: 4px; }
.app svg { width: 24px; height: 24px; }
.app .bin { height: 26px; }
.running::after { content: ""; width: 2px; height: 2px; border-radius: 50%; background: #1c2a44; }
.aiapp { width: 24px; height: 24px; background: #2d0d08; border: 1px solid #d4743c; color: #f28c3d; font: 700 14px/22px "Liberation Sans", Arial, sans-serif; text-align: center; }
.dock hr { height: 27px; border: 0; border-left: 1px solid #6488c2; margin: 0 2px; }
```
